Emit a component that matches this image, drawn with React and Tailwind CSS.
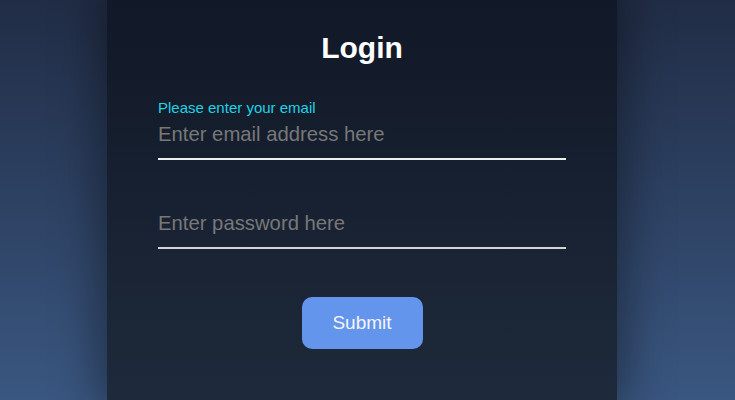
import React from "react";

export default function App() {
  return (
    <div
      className="w-full h-[400px] overflow-hidden bg-gradient-to-b from-[#212d46] to-[#3a5781] font-['Liberation_Sans',Arial,sans-serif]"
    >
      <div className="ml-[107px] w-[510px] h-full bg-gradient-to-b from-[#111827] to-[#1e2a3b] shadow-[0_0_40px_12px_rgba(0,0,0,0.35)] px-[51px] pt-[30px] flex flex-col">
        <h1 className="text-center text-white font-bold text-[30px] leading-[36px]">Login</h1>
        <div className="mt-[32px] flex flex-col">
          <label className="text-[#1fd3e3] text-[15px] leading-[20px]">Please enter your email</label>
          <input
            type="email"
            placeholder="Enter email address here"
            className="mt-[1.6px] bg-transparent outline-none text-[20.3px] leading-[28px] pb-[10px] border-b-2 border-[#eeeeee] text-white placeholder:text-[#787878]"
          />
        </div>
        <div className="mt-[49px] flex flex-col">
          <input
            type="password"
            placeholder="Enter password here"
            className="bg-transparent outline-none text-[20.3px] leading-[28px] pb-[10px] border-b-2 border-[#d4d4d4] text-white placeholder:text-[#787878]"
          />
        </div>
        <div className="mt-[48.6px] flex justify-center">
          <button className="w-[121px] h-[52px] rounded-[10px] bg-[#6495ed] text-[#f5f5f5] text-[19px] leading-[28px]">
            Submit
          </button>
        </div>
      </div>
    </div>
  );
}
